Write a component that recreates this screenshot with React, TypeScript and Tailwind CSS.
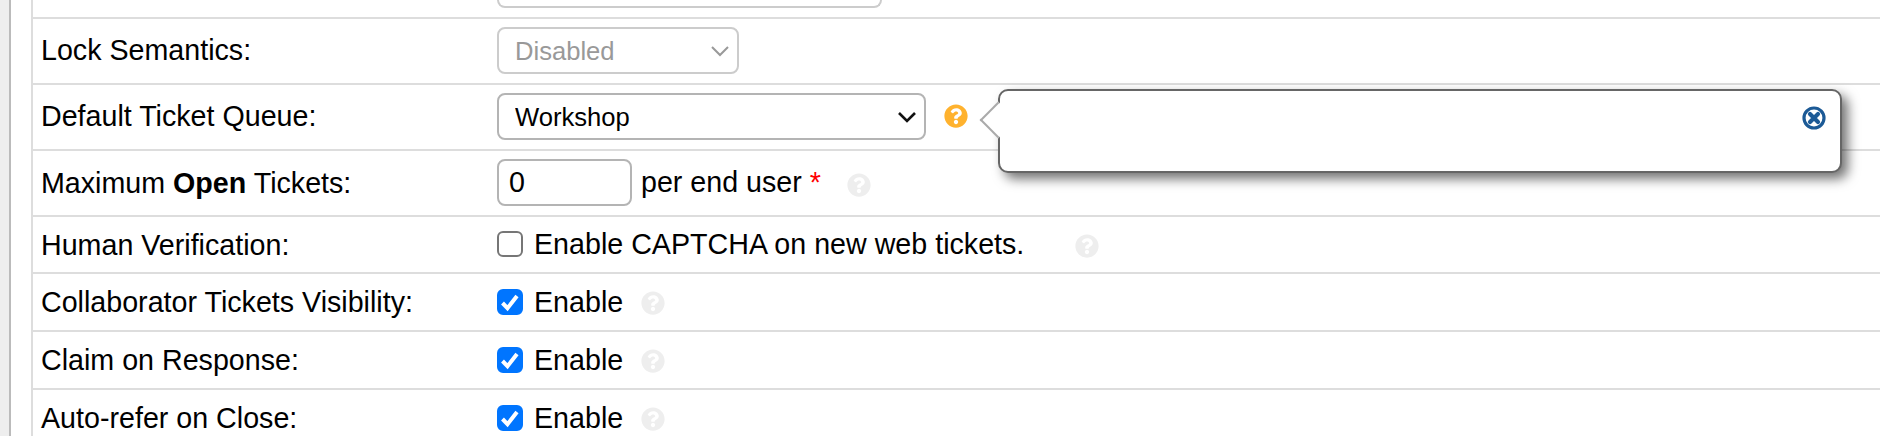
import { FaQuestionCircle } from "react-icons/fa";

function Help({ className }: { className: string }) {
  return <FaQuestionCircle className={`w-[24px] h-[24px] shrink-0 ${className}`} />;
}

function Row({ label, className, children }: { label: React.ReactNode; className: string; children: React.ReactNode }) {
  return (
    <div className={`flex items-center border-t-2 border-[#ddd] ${className}`}>
      <div className="w-[464px] shrink-0 pl-[8px] pt-[1px]">{label}</div>
      <div className="flex items-center">{children}</div>
    </div>
  );
}

function Check({ checked }: { checked?: boolean }) {
  return (
    <span className="relative flex h-[26px] w-[26px] shrink-0">
      <input
        type="checkbox"
        defaultChecked={checked}
        className="m-0 h-[26px] w-[26px] appearance-none rounded-[6px] border-2 border-[#767676] bg-white checked:border-[#0075ff] checked:bg-[#0075ff]"
      />
      {checked && (
        <svg viewBox="0 0 26 26" className="pointer-events-none absolute inset-0 h-[26px] w-[26px]">
          <path d="M5.5 14l5 5.2L20 7" fill="none" stroke="white" strokeWidth="4" />
        </svg>
      )}
    </span>
  );
}

function Chevron({ color, width }: { color: string; width: string }) {
  return (
    <svg viewBox="0 0 18 12" className={`pointer-events-none absolute right-[10px] top-[18px] h-[12px] w-[18px] ${color}`}>
      <path d="M1 2l8 8 8-8" fill="none" stroke="currentColor" strokeWidth={width} />
    </svg>
  );
}

function EnableRow({ label, className }: { label: string; className: string }) {
  return (
    <Row label={label} className={className}>
      <Check checked />
      <span className="ml-[11px]">Enable</span>
      <Help className="ml-[18px] mt-[3px] text-[#eeeeee]" />
    </Row>
  );
}

export default function App() {
  return (
    <div className="h-[436px] overflow-hidden bg-[#eeeeee] pl-[9px] text-[28.65px] text-black font-['Liberation_Sans',Arial,sans-serif]">
      <div className="h-full border-l-2 border-[#bbbbbb] bg-white pl-[20px]">
        <div className="relative h-full border-l-2 border-[#dddddd]">
          <div className="h-[17px] pl-[464px]">
            <div className="h-[8px] w-[385px] rounded-b-[8px] border-2 border-t-0 border-[#cccccc]" />
          </div>

          <Row label="Lock Semantics:" className="h-[66px] pb-[2px]">
            <div className="relative">
              <select disabled className="block h-[47px] w-[242px] appearance-none rounded-[8px] border-2 border-[#cccccc] bg-white pl-[16px] pt-[2px] text-[25.6px] text-[#999999]">
                <option>Disabled</option>
              </select>
              <Chevron color="text-[#999999]" width="2" />
            </div>
          </Row>
          <Row label="Default Ticket Queue:" className="h-[66px] pb-[2px]">
            <div className="relative">
              <select defaultValue="Workshop" className="block h-[47px] w-[429px] appearance-none rounded-[8px] border-2 border-[#b4b4b4] bg-white pl-[16px] pt-[2px] text-[25.6px] text-black">
                <option>Workshop</option>
              </select>
              <Chevron color="text-[#111111]" width="2.6" />
            </div>
            <Help className="ml-[18px] text-[#ffb22e]" />
          </Row>
          <Row label={<>Maximum <b>Open</b> Tickets:</>} className="h-[66px] pb-[1px]">
            <input defaultValue="0" className="h-[47px] w-[135px] rounded-[8px] border-2 border-[#b4b4b4] bg-white pl-[10px]" />
            <span className="ml-[9px]">per end user</span>
            <span className="ml-[8px] text-[#ff0000]">*</span>
            <Help className="ml-[26px] mt-[4px] text-[#eeeeee]" />
          </Row>
          <Row label="Human Verification:" className="h-[57px]">
            <Check />
            <span className="ml-[11px]">Enable CAPTCHA on new web tickets.</span>
            <Help className="ml-[51px] mt-[3px] text-[#eeeeee]" />
          </Row>
          <EnableRow label="Collaborator Tickets Visibility:" className="h-[58px]" />
          <EnableRow label="Claim on Response:" className="h-[58px]" />
          <EnableRow label="Auto-refer on Close:" className="h-[58px]" />

          {/* tip popup */}
          <div className="absolute left-[965px] top-[89px] h-[84px] w-[844px] rounded-[10px] border-2 border-[#666666] bg-white shadow-[6px_6px_12px_rgba(0,0,0,0.55)]">
            <div className="absolute left-[-15px] top-[16px] h-[26px] w-[26px] rotate-45 border-b-2 border-l-2 border-[#aaaaaa] bg-white" />
            <svg viewBox="0 0 24 24" className="absolute right-[14px] top-[15px] h-[24px] w-[24px]">
              <circle cx="12" cy="12" r="10" fill="none" stroke="#1c5a96" strokeWidth="3.2" />
              <path d="M8 8l8 8M16 8l-8 8" stroke="#1c5a96" strokeWidth="4.2" strokeLinecap="round" />
            </svg>
          </div>
        </div>
      </div>
    </div>
  );
}
